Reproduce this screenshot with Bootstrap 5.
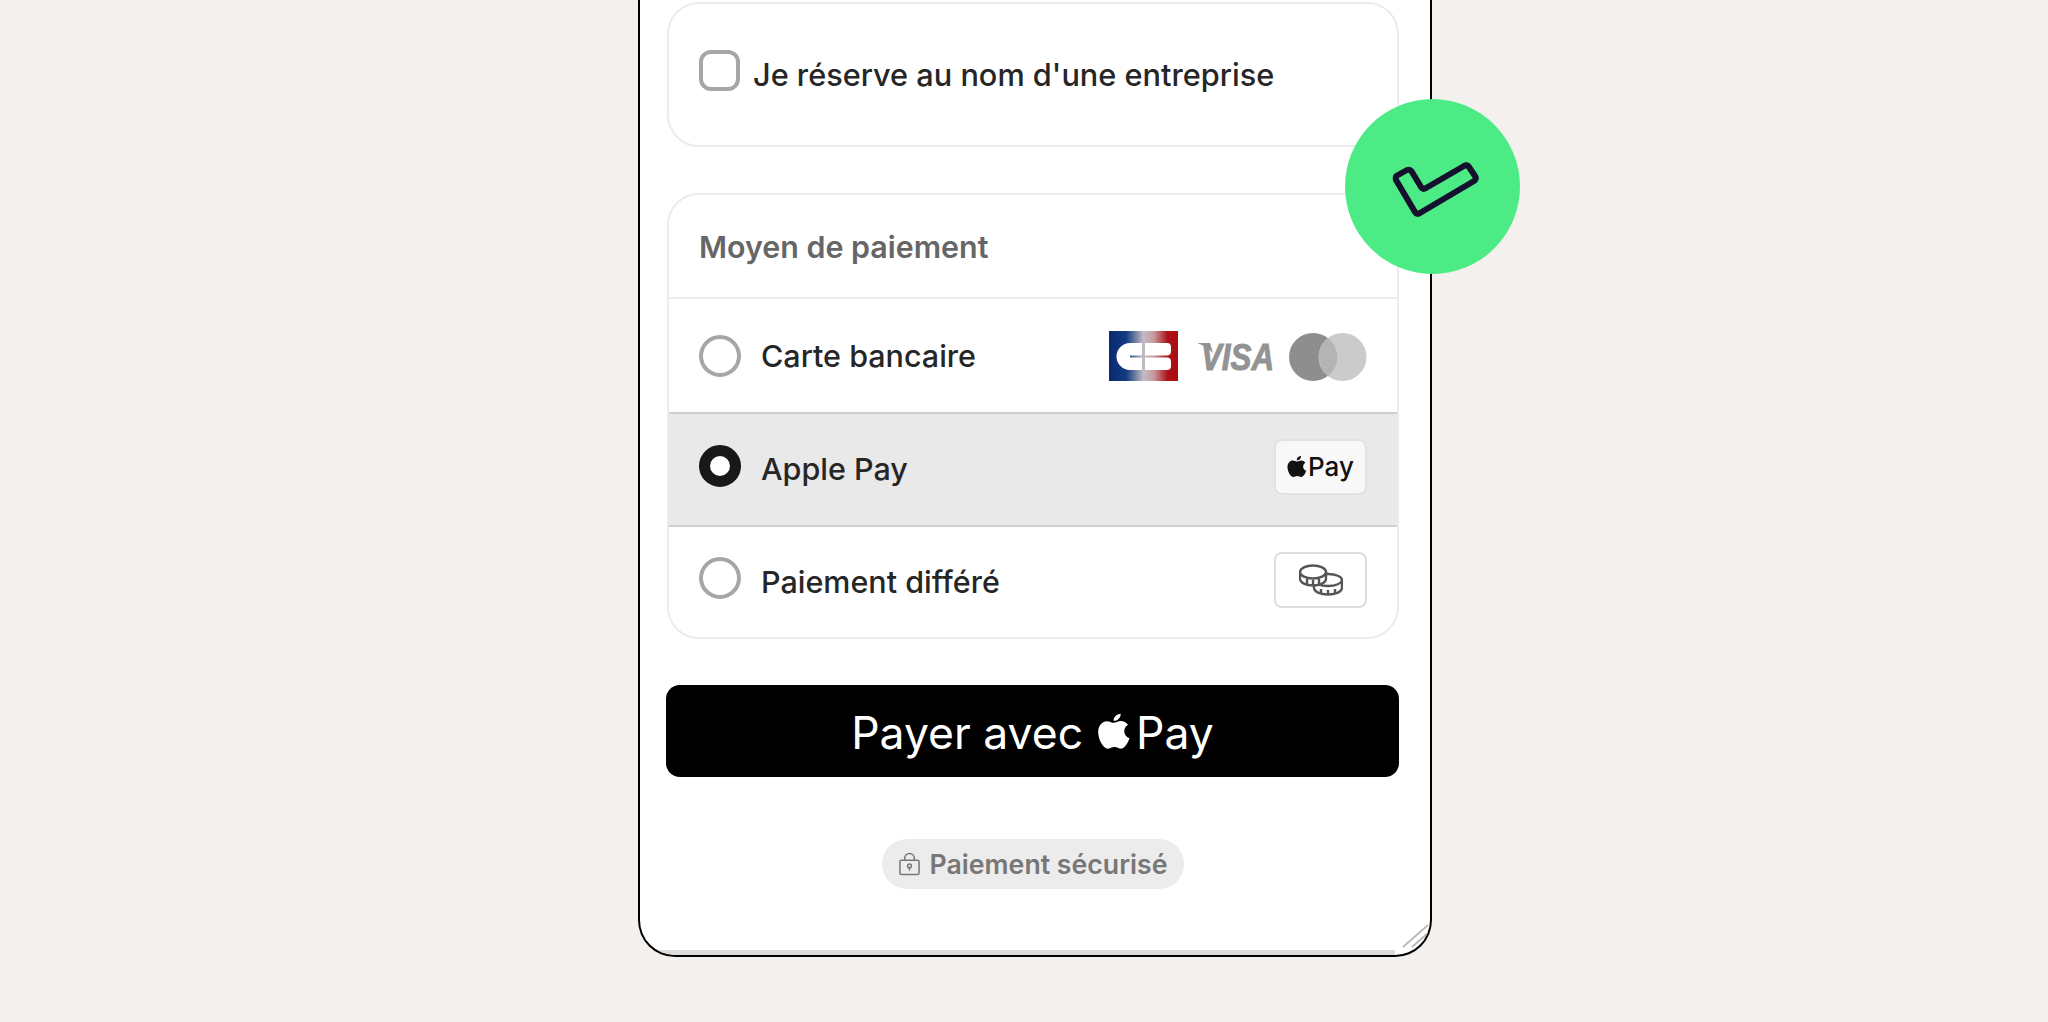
<!DOCTYPE html>
<html lang="fr">
  <head>
    <meta charset="UTF-8" />
    <meta name="viewport" content="width=device-width, initial-scale=1.0" />
    <title>Paiement</title>
    <link
      href="https://cdn.jsdelivr.net/npm/bootstrap@5.3.0/dist/css/bootstrap.min.css"
      rel="stylesheet"
    />
    <style>
      html, body { height: 1022px; overflow: hidden; }
      body { background: #f4f0ed; font-family: Inter, "Liberation Sans", sans-serif; color: #262626; }
      .telephone {
        position: relative; width: 794px; height: 957px; margin-left: 638px;
        background: #fff; border: 2px solid #000; border-top: 0;
        border-radius: 0 0 37px 37px; overflow: hidden;
        padding: 2px 31px 0 27px;
      }
      .bande { position: absolute; left: 0; right: 35px; bottom: 0; height: 5px; background: #dcdcdc; }
      .poignee { position: absolute; right: 0; bottom: 0; }
      .bloc { border: 2px solid #ececec; border-radius: 32px; overflow: hidden; background: #fff; }
      .bloc-entreprise { height: 145px; padding: 46px 30px 0; margin-bottom: 46px; }
      .case { width: 41px; height: 41px; border: 4px solid #a6a6a6; border-radius: 12px; flex: none; }
      .libelle-case { font-size: 30.7px; font-weight: 500; line-height: 1; margin-left: 13px; margin-top: 10px; }
      .entete { height: 104px; padding: 3px 30px 0; font-size: 30.4px; font-weight: 600; color: #666; border-bottom: 2px solid #ececec; }
      .ligne { height: 113px; padding: 0 30px; font-size: 30.5px; font-weight: 500; }
      .ligne-active { height: 115px; background: #e9e9e9; border-top: 2px solid #cfcfcf; border-bottom: 2px solid #cfcfcf; }
      .ligne-basse { height: 110px; }
      .ligne-nom { margin-left: 20px; }
      .ligne-active .ligne-nom { margin-top: -2px; }
      .radio { width: 42px; height: 42px; border: 4px solid #a6a6a6; border-radius: 50%; flex: none; background: #fff; }
      .ligne-active .radio, .ligne-basse .radio { margin-top: -8px; }
      .radio-actif { border: 11px solid #181818; }
      .puce { width: 93px; height: 56px; border: 2px solid #dedede; border-radius: 8px; background: #fff; margin-top: -5px; }
      .puce-active { background: #f8f8f8; border-color: #e2e2e2; }
      .texte-puce { font-size: 26px; font-weight: 500; color: #111; margin-left: 1px; line-height: 1; }
      .btn-payer {
        height: 92px; margin-top: 46px; background: #000; color: #fff;
        font-size: 44.5px; border-radius: 14px; width: 733px; margin-left: -1px;
      }
      .btn-payer:hover { background: #000; color: #fff; }
      .pomme { margin: -3px 5px 0 14px; }
      .pilule {
        height: 50px; width: 302px; margin: 62px auto 0; background: #ececec; border-radius: 25px;
        font-size: 26.7px; font-weight: 600; color: #777; gap: 10px;
      }
      .rond-vert {
        position: absolute; left: 1345px; top: 99px; width: 175px; height: 175px;
        background: #4deb85; border-radius: 50%; padding: 7px 0 0 6px;
      }
    </style>
  </head>
  <body>
    <div class="telephone">
      <!-- Entreprise -->
      <div class="bloc bloc-entreprise d-flex align-items-start">
        <span class="case"></span>
        <span class="libelle-case">Je réserve au nom d'une entreprise</span>
      </div>

      <!-- Moyen de paiement -->
      <div class="bloc">
        <div class="entete d-flex align-items-center">Moyen de paiement</div>
        <div class="ligne d-flex align-items-center">
          <span class="radio"></span>
          <span class="ligne-nom flex-grow-1">Carte bancaire</span>
          <svg width="258" height="50" viewBox="0 0 258 50">
            <defs>
              <linearGradient id="cb" x1="0" x2="1" y1="0" y2="0">
                <stop offset="0" stop-color="#0b2a70" />
                <stop offset=".25" stop-color="#123a80" />
                <stop offset=".5" stop-color="#c4bcc4" />
                <stop offset=".65" stop-color="#c49a9e" />
                <stop offset=".85" stop-color="#ad1218" />
                <stop offset="1" stop-color="#a80c10" />
              </linearGradient>
            </defs>
            <rect x="0" y="0" width="69" height="50" fill="url(#cb)" />
            <path d="M33 12H21a13.500 13.500 0 0 0 0 27H33V26.500H21v-2H33z" fill="#fff" />
            <path d="M36 12H58a4 4 0 0 1 4 4v4a4 4 0 0 1-4 4.500H36zM36 26.500H58a4 4 0 0 1 4 4V35a4 4 0 0 1-4 4H36z" fill="#fff" />
            <path d="M88 12H101L104 22Q97 15 88 12z" fill="#939393" />
            <text x="92" y="39" font-family="Liberation Sans, sans-serif" font-size="37" font-weight="700" font-style="italic" fill="#939393" stroke="#939393" stroke-width="1" textLength="73" lengthAdjust="spacingAndGlyphs">VISA</text>
            <circle cx="204" cy="26" r="24" fill="#8e8e8e" />
            <circle cx="233.500" cy="26" r="24" fill="#cbcbcb" />
            <path d="M219 7a24 24 0 0 1 0 38 24 24 0 0 1 0-38z" fill="#b4b4b4" />
          </svg>
        </div>
        <div class="ligne ligne-active d-flex align-items-center">
          <span class="radio radio-actif"></span>
          <span class="ligne-nom flex-grow-1">Apple Pay</span>
          <span class="puce puce-active d-flex align-items-center justify-content-center">
            <svg width="20" height="24" viewBox="0 0 20 24"><path d="M14 1c.2 2-1.700 4.500-4.200 4.300C9.500 3 11.800 1.100 14 1zM10 6.500c1 0 2.300-1.100 4.200-1.100 1.500 0 3.200.8 4.200 2.300-3.400 2-2.800 6.700.9 8.100-.8 2.200-2.700 6.200-5 6.200-1.600 0-2.200-1-4-1-1.900 0-2.500 1-4 1-2.900 0-5.800-5.600-5.800-10 0-4 2.600-6.500 5.200-6.500 1.700 0 3.100 1 3.800 1z" fill="#111" /></svg>
            <span class="texte-puce">Pay</span>
          </span>
        </div>
        <div class="ligne ligne-basse d-flex align-items-center">
          <span class="radio"></span>
          <span class="ligne-nom flex-grow-1">Paiement différé</span>
          <span class="puce d-flex align-items-center justify-content-center">
            <svg width="44" height="32" viewBox="0 0 44 32" fill="#fff" stroke="#555" stroke-width="2.400">
              <path d="M15 16v8c0 3.500 6 6.500 14 6.500s14-3 14-6.500v-8z" />
              <ellipse cx="29" cy="16" rx="14" ry="6" />
              <path d="M22 25v5M29 26v5M36 25v5" fill="none" />
              <path d="M1 8v7c0 3.500 6 6.500 13 6.500s13-3 13-6.500V8z" />
              <ellipse cx="14" cy="8" rx="13" ry="6.500" />
              <path d="M8 15v6M14 16v6M20 15v6" fill="none" />
            </svg>
          </span>
        </div>
      </div>

      <button type="button" class="btn btn-payer d-flex align-items-center justify-content-center p-0 pt-1">
        <span>Payer avec</span>
        <svg class="pomme" width="34" height="40" viewBox="0 0 20 24"><path d="M14 1c.2 2-1.700 4.500-4.200 4.300C9.500 3 11.800 1.100 14 1zM10 6.500c1 0 2.300-1.100 4.200-1.100 1.500 0 3.200.8 4.200 2.300-3.400 2-2.800 6.700.9 8.100-.8 2.200-2.700 6.200-5 6.200-1.600 0-2.200-1-4-1-1.900 0-2.500 1-4 1-2.900 0-5.800-5.600-5.800-10 0-4 2.600-6.500 5.200-6.500 1.700 0 3.100 1 3.800 1z" fill="#fff" /></svg>
        <span>Pay</span>
      </button>

      <div class="pilule d-flex align-items-center justify-content-center">
        <svg width="21" height="24" viewBox="0 0 22 24" fill="none" stroke="#777" stroke-width="1.600">
          <rect x="1" y="8" width="20" height="15" rx="1.500" />
          <path d="M6 8V6a5 5 0 0 1 10 0v2" />
          <circle cx="11" cy="14" r="2" />
          <path d="M11 16v3" />
        </svg>
        <span>Paiement sécurisé</span>
      </div>

      <div class="bande"></div>
      <svg class="poignee" width="28" height="32" viewBox="0 0 28 32" stroke="#bbb" stroke-width="2">
        <path d="M1 24 26 2M10 24 26 10" />
      </svg>
    </div>

    <!-- Validation -->
    <div class="rond-vert d-flex align-items-center justify-content-center">
      <svg width="91" height="60" viewBox="0 0 91 60" fill="none" stroke="#14102e" stroke-width="6" stroke-linejoin="round">
        <path d="M6 20 Q5 16 8 15 L17 10 Q20 9 22 12 L31 27 Q33 30 36 28 L74 6 Q77 4 79 7 L85 16 Q87 19 84 21 L30 53 Q27 55 25 52z" />
      </svg>
    </div>
  </body>
</html>
